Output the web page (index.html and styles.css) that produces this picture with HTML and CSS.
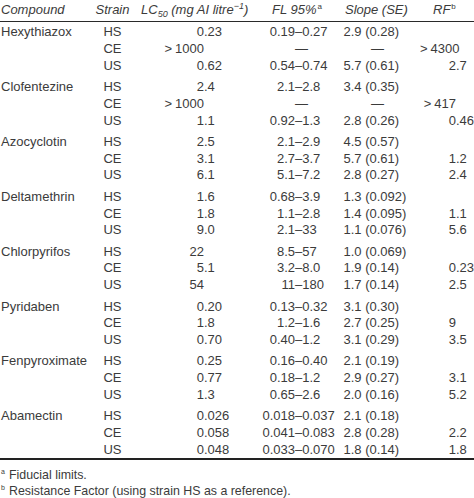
FILE: index.html
```html
<!DOCTYPE html>
<html lang="en">
<head>
<meta charset="utf-8">
<title>Toxicity of acaricides</title>
<link rel="stylesheet" href="styles.css">
</head>
<body>
<div class="table">
  <div class="row head">
    <div class="c-name">Compound</div>
    <div class="c-strain">Strain</div>
    <div class="h-lc">LC<span class="sub">50</span> (mg AI litre<span class="sup">&minus;1</span>)</div>
    <div class="h-fl">FL 95%<span class="sup up">a</span></div>
    <div class="h-sl">Slope (SE)</div>
    <div class="h-rf">RF<span class="sup up">b</span></div>
  </div>

  <div class="group">
    <div class="row"><div class="c-name">Hexythiazox</div><div class="c-strain">HS</div><div class="c-lc"><span class="i">0</span>.23</div><div class="c-fl"><span class="lo">0.19</span>–0.27</div><div class="c-sl">2.9 (0.28)</div><div class="c-rf"></div></div>
    <div class="row"><div class="c-name"></div><div class="c-strain">CE</div><div class="c-lc"><span class="i"><span class="gt">&gt;</span>1000</span></div><div class="c-fl"><span class="lo"></span>—</div><div class="c-sl na">—</div><div class="c-rf"><span class="i"><span class="gt">&gt;</span>4300</span></div></div>
    <div class="row"><div class="c-name"></div><div class="c-strain">US</div><div class="c-lc"><span class="i">0</span>.62</div><div class="c-fl"><span class="lo">0.54</span>–0.74</div><div class="c-sl">5.7 (0.61)</div><div class="c-rf"><span class="i">2</span>.7</div></div>
  </div>

  <div class="group">
    <div class="row"><div class="c-name">Clofentezine</div><div class="c-strain">HS</div><div class="c-lc"><span class="i">2</span>.4</div><div class="c-fl"><span class="lo">2.1</span>–2.8</div><div class="c-sl">3.4 (0.35)</div><div class="c-rf"></div></div>
    <div class="row"><div class="c-name"></div><div class="c-strain">CE</div><div class="c-lc"><span class="i"><span class="gt">&gt;</span>1000</span></div><div class="c-fl"><span class="lo"></span>—</div><div class="c-sl na">—</div><div class="c-rf"><span class="i"><span class="gt">&gt;</span>417</span></div></div>
    <div class="row"><div class="c-name"></div><div class="c-strain">US</div><div class="c-lc"><span class="i">1</span>.1</div><div class="c-fl"><span class="lo">0.92</span>–1.3</div><div class="c-sl">2.8 (0.26)</div><div class="c-rf"><span class="i">0</span>.46</div></div>
  </div>

  <div class="group">
    <div class="row"><div class="c-name">Azocyclotin</div><div class="c-strain">HS</div><div class="c-lc"><span class="i">2</span>.5</div><div class="c-fl"><span class="lo">2.1</span>–2.9</div><div class="c-sl">4.5 (0.57)</div><div class="c-rf"></div></div>
    <div class="row"><div class="c-name"></div><div class="c-strain">CE</div><div class="c-lc"><span class="i">3</span>.1</div><div class="c-fl"><span class="lo">2.7</span>–3.7</div><div class="c-sl">5.7 (0.61)</div><div class="c-rf"><span class="i">1</span>.2</div></div>
    <div class="row"><div class="c-name"></div><div class="c-strain">US</div><div class="c-lc"><span class="i">6</span>.1</div><div class="c-fl"><span class="lo">5.1</span>–7.2</div><div class="c-sl">2.8 (0.27)</div><div class="c-rf"><span class="i">2</span>.4</div></div>
  </div>

  <div class="group">
    <div class="row"><div class="c-name">Deltamethrin</div><div class="c-strain">HS</div><div class="c-lc"><span class="i">1</span>.6</div><div class="c-fl"><span class="lo">0.68</span>–3.9</div><div class="c-sl">1.3 (0.092)</div><div class="c-rf"></div></div>
    <div class="row"><div class="c-name"></div><div class="c-strain">CE</div><div class="c-lc"><span class="i">1</span>.8</div><div class="c-fl"><span class="lo">1.1</span>–2.8</div><div class="c-sl">1.4 (0.095)</div><div class="c-rf"><span class="i">1</span>.1</div></div>
    <div class="row"><div class="c-name"></div><div class="c-strain">US</div><div class="c-lc"><span class="i">9</span>.0</div><div class="c-fl"><span class="lo">2.1</span>–33</div><div class="c-sl">1.1 (0.076)</div><div class="c-rf"><span class="i">5</span>.6</div></div>
  </div>

  <div class="group">
    <div class="row"><div class="c-name">Chlorpyrifos</div><div class="c-strain">HS</div><div class="c-lc"><span class="i">22</span></div><div class="c-fl"><span class="lo">8.5</span>–57</div><div class="c-sl">1.0 (0.069)</div><div class="c-rf"></div></div>
    <div class="row"><div class="c-name"></div><div class="c-strain">CE</div><div class="c-lc"><span class="i">5</span>.1</div><div class="c-fl"><span class="lo">3.2</span>–8.0</div><div class="c-sl">1.9 (0.14)</div><div class="c-rf"><span class="i">0</span>.23</div></div>
    <div class="row"><div class="c-name"></div><div class="c-strain">US</div><div class="c-lc"><span class="i">54</span></div><div class="c-fl"><span class="lo">11</span>–180</div><div class="c-sl">1.7 (0.14)</div><div class="c-rf"><span class="i">2</span>.5</div></div>
  </div>

  <div class="group">
    <div class="row"><div class="c-name">Pyridaben</div><div class="c-strain">HS</div><div class="c-lc"><span class="i">0</span>.20</div><div class="c-fl"><span class="lo">0.13</span>–0.32</div><div class="c-sl">3.1 (0.30)</div><div class="c-rf"></div></div>
    <div class="row"><div class="c-name"></div><div class="c-strain">CE</div><div class="c-lc"><span class="i">1</span>.8</div><div class="c-fl"><span class="lo">1.2</span>–1.6</div><div class="c-sl">2.7 (0.25)</div><div class="c-rf"><span class="i">9</span></div></div>
    <div class="row"><div class="c-name"></div><div class="c-strain">US</div><div class="c-lc"><span class="i">0</span>.70</div><div class="c-fl"><span class="lo">0.40</span>–1.2</div><div class="c-sl">3.1 (0.29)</div><div class="c-rf"><span class="i">3</span>.5</div></div>
  </div>

  <div class="group">
    <div class="row"><div class="c-name">Fenpyroximate</div><div class="c-strain">HS</div><div class="c-lc"><span class="i">0</span>.25</div><div class="c-fl"><span class="lo">0.16</span>–0.40</div><div class="c-sl">2.1 (0.19)</div><div class="c-rf"></div></div>
    <div class="row"><div class="c-name"></div><div class="c-strain">CE</div><div class="c-lc"><span class="i">0</span>.77</div><div class="c-fl"><span class="lo">0.18</span>–1.2</div><div class="c-sl">2.9 (0.27)</div><div class="c-rf"><span class="i">3</span>.1</div></div>
    <div class="row"><div class="c-name"></div><div class="c-strain">US</div><div class="c-lc"><span class="i">1</span>.3</div><div class="c-fl"><span class="lo">0.65</span>–2.6</div><div class="c-sl">2.0 (0.16)</div><div class="c-rf"><span class="i">5</span>.2</div></div>
  </div>

  <div class="group last">
    <div class="row"><div class="c-name">Abamectin</div><div class="c-strain">HS</div><div class="c-lc"><span class="i">0</span>.026</div><div class="c-fl"><span class="lo">0.018</span>–0.037</div><div class="c-sl">2.1 (0.18)</div><div class="c-rf"></div></div>
    <div class="row"><div class="c-name"></div><div class="c-strain">CE</div><div class="c-lc"><span class="i">0</span>.058</div><div class="c-fl"><span class="lo">0.041</span>–0.083</div><div class="c-sl">2.8 (0.28)</div><div class="c-rf"><span class="i">2</span>.2</div></div>
    <div class="row"><div class="c-name"></div><div class="c-strain">US</div><div class="c-lc"><span class="i">0</span>.048</div><div class="c-fl"><span class="lo">0.033</span>–0.070</div><div class="c-sl">1.8 (0.14)</div><div class="c-rf"><span class="i">1</span>.8</div></div>
  </div>
</div>

<div class="notes">
  <p class="note"><span class="mark">a</span>Fiducial limits.</p>
  <p class="note"><span class="mark">b</span>Resistance Factor (using strain HS as a reference).</p>
</div>
</body>
</html>
```

FILE: styles.css
```css
html, body {
  margin: 0;
  padding: 0;
  background: #ffffff;
}

body {
  font-family: "Liberation Sans", Arial, sans-serif;
  font-size: 13px;
  color: #3b3b3b;
  width: 474px;
  overflow: hidden;
}

.table {
  border-bottom: 2px solid #222222;
}

.row {
  display: grid;
  grid-template-columns: 95px 35px 128px 82px 80px 54px;
  height: 16.7px;
  line-height: 16.7px;
  white-space: nowrap;
}

.row.head {
  height: 20px;
  line-height: 20px;
  padding-bottom: 1px;
  font-style: italic;
  border-bottom: 1px solid #2a2a2a;
}

.group {
  padding: 2.4px 0;
}

.group.last {
  padding-bottom: 0;
}

.c-name {
  padding-left: 1px;
}

.c-strain {
  text-align: center;
}

.h-lc {
  padding-left: 11px;
}

.h-fl {
  padding-left: 14px;
}

.h-sl {
  padding-left: 5px;
}

.h-rf {
  padding-left: 13px;
}

.sub {
  font-size: 9px;
  line-height: 0;
  vertical-align: -3px;
}

.sup {
  font-size: 9px;
  line-height: 0;
  vertical-align: 5px;
}

.sup.up {
  font-style: normal;
  font-size: 8px;
  margin-left: 1px;
}

.c-lc .i {
  display: inline-block;
  width: 74px;
  text-align: right;
}

.c-fl .lo {
  display: inline-block;
  width: 37px;
  text-align: right;
}

.c-sl {
  padding-left: 3.5px;
}

.c-sl.na {
  padding-left: 31px;
}

.c-rf .i {
  display: inline-block;
  width: 36px;
  text-align: right;
}

.gt {
  margin-right: 3px;
}

.notes {
  margin-top: 9px;
  font-size: 12.4px;
}

.note {
  margin: 0;
  height: 13.6px;
  line-height: 13.6px;
  white-space: nowrap;
}

.note + .note {
  margin-top: 1.6px;
}

.mark {
  display: inline-block;
  width: 9px;
  padding-left: 1px;
  box-sizing: border-box;
  font-size: 7px;
  line-height: 0;
  vertical-align: 5px;
}
```
